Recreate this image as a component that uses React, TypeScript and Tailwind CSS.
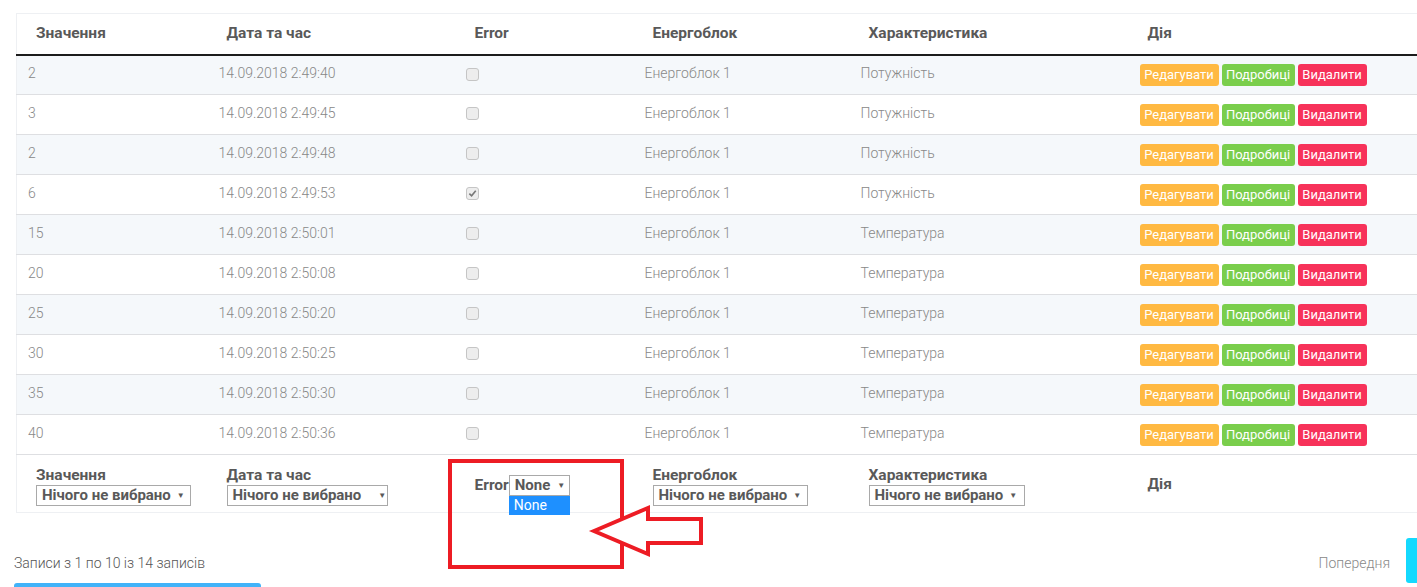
type Row = { value: string; date: string; error: boolean; unit: string; kind: string }

const rows: Row[] = [
  { value: '2', date: '14.09.2018 2:49:40', error: false, unit: 'Енергоблок 1', kind: 'Потужність' },
  { value: '3', date: '14.09.2018 2:49:45', error: false, unit: 'Енергоблок 1', kind: 'Потужність' },
  { value: '2', date: '14.09.2018 2:49:48', error: false, unit: 'Енергоблок 1', kind: 'Потужність' },
  { value: '6', date: '14.09.2018 2:49:53', error: true, unit: 'Енергоблок 1', kind: 'Потужність' },
  { value: '15', date: '14.09.2018 2:50:01', error: false, unit: 'Енергоблок 1', kind: 'Температура' },
  { value: '20', date: '14.09.2018 2:50:08', error: false, unit: 'Енергоблок 1', kind: 'Температура' },
  { value: '25', date: '14.09.2018 2:50:20', error: false, unit: 'Енергоблок 1', kind: 'Температура' },
  { value: '30', date: '14.09.2018 2:50:25', error: false, unit: 'Енергоблок 1', kind: 'Температура' },
  { value: '35', date: '14.09.2018 2:50:30', error: false, unit: 'Енергоблок 1', kind: 'Температура' },
  { value: '40', date: '14.09.2018 2:50:36', error: false, unit: 'Енергоблок 1', kind: 'Температура' },
]

const headers = ['Значення', 'Дата та час', 'Error', 'Енергоблок', 'Характеристика', 'Дія']
const widths = ['w-[191px]', 'w-[248px]', 'w-[178px]', 'w-[216px]', 'w-[279px]', '']

export default function App() {
  return (
    <div className="relative h-[587px] w-[1417px] overflow-hidden bg-white font-['Roboto',sans-serif]">
      <div className="pt-[13px] pl-[16px]">
        <table className="w-[1401px] table-fixed border-collapse border-l border-t border-[#eef0f3]">
          <colgroup>
            {widths.map((w, i) => (
              <col key={i} className={w} />
            ))}
          </colgroup>
          <thead>
            <tr className="h-[41px] border-b-2 border-[#1c1c1c]">
              {headers.map((h) => (
                <th key={h} className="pl-[19px] text-left text-[15.5px] font-bold text-[#595959]">
                  {h}
                </th>
              ))}
            </tr>
          </thead>
          <tbody>
            {rows.map((r, i) => (
              <tr
                key={i}
                className={`h-[40px] border-b border-[#dedfe2] text-[14px] font-light text-[#888] ${
                  i % 2 === 0 ? 'bg-[#f5f8fb]' : 'bg-white'
                }`}
              >
                <td className="pl-[11px] pb-[2px]">{r.value}</td>
                <td className="pl-[11px] pb-[2px]">{r.date}</td>
                <td className="pl-[10px] pb-[3px]">
                  <Checkbox checked={r.error} />
                </td>
                <td className="pl-[11px] pb-[2px]">{r.unit}</td>
                <td className="pl-[11px] pb-[2px]">{r.kind}</td>
                <td className="pl-[11px]">
                  <div className="flex gap-[3px] font-normal">
                    <Btn color="bg-[#ffb942]" w="w-[79px]">Редагувати</Btn>
                    <Btn color="bg-[#7ace4c]" w="w-[73px]">Подробиці</Btn>
                    <Btn color="bg-[#f7325a]" w="w-[69px]">Видалити</Btn>
                  </div>
                </td>
              </tr>
            ))}
          </tbody>
          <tfoot>
            <tr className="h-[58px] border-t border-b border-t-[#1c1c1c] border-b-[#eef0f3] text-[15.5px] font-bold text-[#595959]">
              <FilterCell label="Значення" w="w-[155px]" />
              <FilterCell label="Дата та час" w="w-[161px]" extra />
              <td className="pl-[19px] pt-[4px] align-middle">
                <div className="flex items-center">
                  <span>Error</span>
                  <div className="relative">
                    <div className="flex h-[21px] w-[61px] items-center border border-[#a9a9a9] bg-white pl-[5px] text-[15px]">
                      None
                      <span className="ml-[7px] text-[8px]">▼</span>
                    </div>
                    <div className="absolute left-0 top-[21px] flex h-[19px] w-[61px] items-center bg-[#1e90ff] pl-[5px] text-[14px] font-normal text-white">
                      None
                    </div>
                  </div>
                </div>
              </td>
              <FilterCell label="Енергоблок" w="w-[155px]" />
              <FilterCell label="Характеристика" w="w-[156px]" />
              <td className="pl-[19px] pt-[2px]">Дія</td>
            </tr>
          </tfoot>
        </table>
      </div>

      <div className="mt-[40px] flex items-start justify-between pl-[14px]">
        <p className="text-[14px] font-light text-[#555]">Записи з 1 по 10 із 14 записів</p>
        <div className="mt-[-15px] flex items-start gap-[16px]">
          <span className="mt-[15px] text-[14px] font-light text-[#888]">Попередня</span>
          <div className="h-[45px] w-[11px] rounded-l-[3px] bg-[#14d9fe]" />
        </div>
      </div>
      <div className="absolute bottom-0 left-[14px] h-[4px] w-[247px] rounded-t-[3px] bg-[#41b3f9]" />

      {/* annotation overlay */}
      <div className="absolute left-[448px] top-[459px] h-[110px] w-[176px] border-[4px] border-[#ed1c24]" />
      <svg className="absolute left-[588px] top-[501px]" width="120" height="60" viewBox="0 0 120 60">
        <polygon
          points="6,30 60,7 60,18 113,18 113,42 60,42 60,53"
          fill="white"
          stroke="#ed1c24"
          strokeWidth="4"
        />
      </svg>
    </div>
  )
}

function Checkbox({ checked }: { checked: boolean }) {
  return (
    <span className="inline-flex h-[13px] w-[13px] items-center justify-center rounded-[3px] border border-[#c5c5c5] bg-[#ededed] align-middle">
      {checked && (
        <svg width="9" height="9" viewBox="0 0 10 10">
          <path d="M1.5 5.2 L4 7.6 L8.6 2" fill="none" stroke="#777" strokeWidth="1.8" />
        </svg>
      )}
    </span>
  )
}

function Btn({ color, w, children }: { color: string; w: string; children: string }) {
  return (
    <span className={`flex h-[22px] items-center justify-center rounded-[3px] text-[13px] text-white ${color} ${w}`}>
      {children}
    </span>
  )
}

function FilterCell({ label, w, extra }: { label: string; w: string; extra?: boolean }) {
  return (
    <td className="pl-[19px] pt-[10px] align-top">
      <div className="leading-[20px]">{label}</div>
      <div className={`flex h-[21px] items-center border border-[#a9a9a9] bg-white pl-[5px] text-[15px] ${w}`}>
        <span>Нічого не вибрано</span>
        <span className={`${extra ? 'ml-[17px]' : 'ml-[6px]'} text-[8px]`}>▼</span>
      </div>
    </td>
  )
}
